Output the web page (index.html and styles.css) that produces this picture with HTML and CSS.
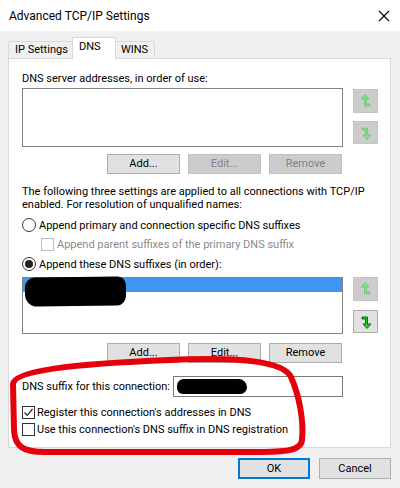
FILE: index.html
```html
<!DOCTYPE html>
<html>
<head>
<meta charset="utf-8">
<link rel="stylesheet" href="styles.css">
</head>
<body>
<div class="window">
  <div class="titlebar">
    <span class="title">Advanced TCP/IP Settings</span>
    <svg class="close" width="12" height="12" viewBox="0 0 12 12"><path d="M1 1L11 11M11 1L1 11" stroke="#000" stroke-width="1.1" fill="none"/></svg>
  </div>
  <div class="client">
    <div class="tabs">
      <div class="tab t-ip">IP Settings</div>
      <div class="tab t-dns active">DNS</div>
      <div class="tab t-wins">WINS</div>
    </div>
    <div class="panel">
      <div class="label">DNS server addresses, in order of use:</div>
      <div class="listrow">
        <div class="listbox list1"></div>
        <div class="arrows a1">
          <div class="arrowbtn up disabled">
            <svg width="12" height="16" viewBox="0 0 12 16"><path d="M5 1.5L9 6L6.5 6L6.5 11L10 11L10 13L4.5 13L4.5 6L1 6Z" fill="#7fe07f" stroke="#5cc05c" stroke-width="0.6"/></svg>
          </div>
          <div class="arrowbtn down disabled">
            <svg width="12" height="16" viewBox="0 0 12 16"><path d="M2 3L7.5 3L7.5 10L11 10L7 14.5L3 10L5.5 10L5.5 5L2 5Z" fill="#7fe07f" stroke="#5cc05c" stroke-width="0.6"/></svg>
          </div>
        </div>
      </div>
      <div class="btnrow">
        <div class="btn">Add...</div>
        <div class="btn disabled">Edit...</div>
        <div class="btn disabled">Remove</div>
      </div>
      <p class="info">The following three settings are applied to all connections with TCP/IP<br>enabled. For resolution of unqualified names:</p>
      <div class="opt r1"><span class="radio"></span><span>Append primary and connection specific DNS suffixes</span></div>
      <div class="opt c0 dis"><span class="check off"></span><span>Append parent suffixes of the primary DNS suffix</span></div>
      <div class="opt r2"><span class="radio on"><span class="dot"></span></span><span>Append these DNS suffixes (in order):</span></div>
      <div class="listrow lr2">
        <div class="listbox list2">
          <div class="selrow"></div>
          <div class="blob"></div>
        </div>
        <div class="arrows a2">
          <div class="arrowbtn up disabled">
            <svg width="12" height="16" viewBox="0 0 12 16"><path d="M5 1.5L9 6L6.5 6L6.5 11L10 11L10 13L4.5 13L4.5 6L1 6Z" fill="#7fe07f" stroke="#5cc05c" stroke-width="0.6"/></svg>
          </div>
          <div class="arrowbtn down enabled">
            <svg width="12" height="16" viewBox="0 0 12 16"><path d="M2 3L7.5 3L7.5 10L11 10L7 14.5L3 10L5.5 10L5.5 5L2 5Z" fill="#1ed01e" stroke="#0a5a0a" stroke-width="0.9"/></svg>
          </div>
        </div>
      </div>
      <div class="btnrow b2">
        <div class="btn">Add...</div>
        <div class="btn">Edit...</div>
        <div class="btn">Remove</div>
      </div>
      <div class="suffixrow">
        <span class="slabel">DNS suffix for this connection:</span>
        <div class="textbox"><div class="blob2"></div></div>
      </div>
      <div class="opt cb1"><span class="check on"><svg width="11" height="11" viewBox="0 0 11 11"><path d="M1.5 5.5L4.2 8.3L9.5 2" stroke="#222" stroke-width="1.2" fill="none"/></svg></span><span>Register this connection's addresses in DNS</span></div>
      <div class="opt cb2"><span class="check"></span><span>Use this connection's DNS suffix in DNS registration</span></div>
    </div>
    <div class="footer">
      <div class="btn ok">OK</div>
      <div class="btn cancel">Cancel</div>
    </div>
  </div>
</div>
<svg class="annot" width="400" height="488" viewBox="0 0 400 488">
  <path d="M13 384 C14 371 70 364 170 360 C240 357 283 361 291 377 C299 395 304 420 302 440 C301 451 285 452 255 452 L45 452 C22 452 15 446 14 430 Z" fill="none" stroke="#e5000c" stroke-width="6" stroke-linejoin="round"/>
</svg>
</body>
</html>
```

FILE: styles.css
```css
* { box-sizing: border-box; }
html, body { margin: 0; padding: 0; }
body {
  width: 400px;
  height: 488px;
  overflow: hidden;
  background: #f0f0f0;
  font-family: Roboto, "Noto Sans", "Liberation Sans", sans-serif;
  font-size: 11px;
  color: #000;
  position: relative;
}
.window { width: 400px; height: 488px; }
.titlebar {
  height: 31px;
  background: #fff;
  display: flex;
  align-items: center;
  justify-content: space-between;
  padding: 0 10px 0 9px;
}
.title { font-size: 12px; }
.client { padding: 0 9px 0 8px; }
.tabs {
  display: flex;
  align-items: flex-end;
  height: 27px;
  padding-top: 6px;
  position: relative;
  z-index: 2;
}
.tab {
  height: 17px;
  border: 1px solid #d9d9d9;
  border-bottom: none;
  background: #f0f0f0;
  padding-left: 6px;
  line-height: 15px;
}
.t-ip { width: 64px; border-right: none; }
.t-dns { width: 44px; }
.t-wins { width: 39px; border-left: none; padding-left: 5px; }
.tab.active {
  height: 22px;
  background: #fff;
  margin-bottom: -1px;
  line-height: 17px;
}
.panel {
  height: 390px;
  background: #fff;
  border: 1px solid #d9d9d9;
  padding: 12px 0 0 13px;
}
.label { line-height: 15px; height: 15px; }
.listrow { display: flex; margin-top: 2px; }
.listbox {
  width: 321px;
  height: 59px;
  border: 1px solid #828282;
  background: #fff;
  position: relative;
}
.arrows { margin-left: 10px; width: 25px; display: flex; flex-direction: column; }
.arrowbtn {
  width: 25px;
  height: 24px;
  display: flex;
  align-items: center;
  justify-content: center;
}
.arrowbtn.disabled { background: #cccccc; border: 1px solid #c4c4c4; }
.arrowbtn.enabled { background: #e1e1e1; border: 1px solid #adadad; }
.a1 .up { margin-top: 1px; }
.a1 .down { margin-top: 8px; height: 23px; }
.lr2 { margin-top: 5px; }
.list2 { height: 57px; }
.a2 .down { margin-top: 9px; height: 23px; }
.selrow {
  position: absolute;
  left: 0; right: 0; top: 0;
  height: 14px;
  background: #3d97f0;
}
.blob {
  position: absolute;
  left: 2px;
  top: -1px;
  width: 101px;
  height: 29px;
  background: #000;
  border-radius: 10px 8px 9px 12px / 10px 9px 10px 12px;
  transform: rotate(-0.8deg);
}
.btnrow {
  display: flex;
  justify-content: flex-end;
  gap: 8px;
  width: 320px;
  margin-top: 7px;
}
.btn {
  width: 73px;
  height: 20px;
  background: #e1e1e1;
  border: 1px solid #adadad;
  text-align: center;
  line-height: 18px;
}
.btn.disabled { background: #cccccc; border-color: #bfbfbf; color: #838383; }
.b2 { margin-top: 9px; }
.info { margin: 11px 0 0 0; line-height: 13px; }
.opt { display: flex; align-items: center; height: 16px; }
.r1 { margin-top: 6px; }
.c0 { margin-top: 3px; padding-left: 19px; }
.r2 { margin-top: 4px; }
.radio {
  width: 14px; height: 14px;
  border: 1px solid #333;
  border-radius: 50%;
  margin-right: 3px;
  display: flex; align-items: center; justify-content: center;
  background: #fff;
}
.dot { width: 8px; height: 8px; border-radius: 50%; background: #222; }
.check {
  width: 13px; height: 13px;
  border: 1px solid #333;
  background: #fff;
  margin-right: 2px;
  display: flex; align-items: center; justify-content: center;
}
.check.off { border-color: #bcbcbc; }
.dis { color: #8a8a8a; }
.dis .check { margin-right: 3px; }
.suffixrow { display: flex; align-items: center; margin-top: 13px; height: 21px; }
.slabel { width: 151px; white-space: nowrap; }
.textbox {
  width: 170px;
  height: 21px;
  border: 1px solid #7a7a7a;
  background: #fff;
  position: relative;
}
.blob2 {
  position: absolute;
  left: 3px; top: 2px;
  width: 70px; height: 15px;
  background: #000;
  border-radius: 8px 10px 8px 7px;
}
.cb1 { margin-top: 7px; height: 17px; }
.cb2 { height: 17px; }
.footer {
  display: flex;
  justify-content: flex-end;
  gap: 9px;
  margin-top: 10px;
}
.footer .btn { width: 72px; height: 21px; line-height: 19px; }
.footer .ok { border: 1px solid #0078d7; box-shadow: inset 0 0 0 1px #0078d7; }
.annot { position: absolute; left: 0; top: 0; pointer-events: none; }
```
